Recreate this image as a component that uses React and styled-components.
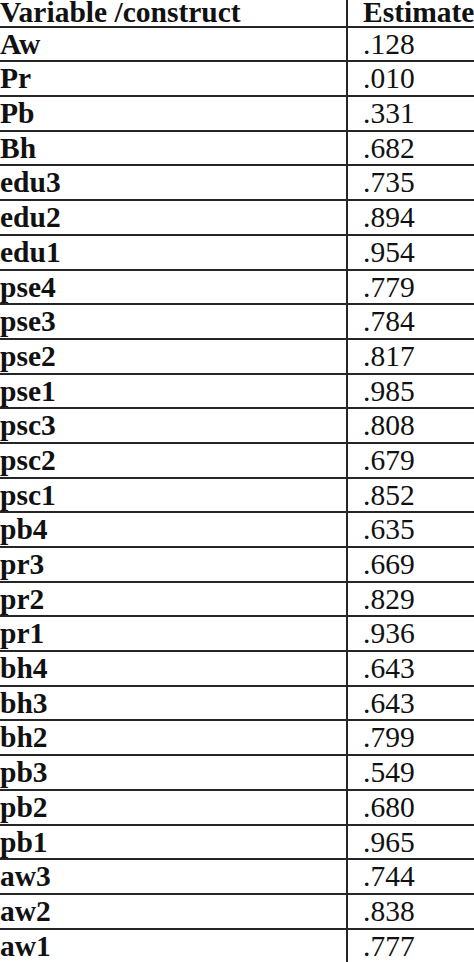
import React from 'react';
import styled, { createGlobalStyle } from 'styled-components';

const GlobalStyle = createGlobalStyle`
  html, body {
    margin: 0;
    padding: 0;
    background: #fff;
    overflow: hidden;
  }
  body {
    font-family: "Liberation Serif", "Times New Roman", serif;
    color: #111;
  }
`;

const rows = [
  ['Aw', '.128'],
  ['Pr', '.010'],
  ['Pb', '.331'],
  ['Bh', '.682'],
  ['edu3', '.735'],
  ['edu2', '.894'],
  ['edu1', '.954'],
  ['pse4', '.779'],
  ['pse3', '.784'],
  ['pse2', '.817'],
  ['pse1', '.985'],
  ['psc3', '.808'],
  ['psc2', '.679'],
  ['psc1', '.852'],
  ['pb4', '.635'],
  ['pr3', '.669'],
  ['pr2', '.829'],
  ['pr1', '.936'],
  ['bh4', '.643'],
  ['bh3', '.643'],
  ['bh2', '.799'],
  ['pb3', '.549'],
  ['pb2', '.680'],
  ['pb1', '.965'],
  ['aw3', '.744'],
  ['aw2', '.838'],
  ['aw1', '.777'],
];

const Table = styled.div`
  width: 474px;
  height: 962px;
  overflow: hidden;
  display: flex;
  flex-direction: column;
`;

const Row = styled.div`
  display: grid;
  grid-template-columns: 348px 1fr;
  flex-shrink: 0;
  box-sizing: border-box;
  height: ${(p) => (p.$head ? '27.7px' : '34.7px')};
  border-bottom: 2px solid #262626;
  font-size: 29.5px;
  line-height: ${(p) => (p.$head ? '24px' : '32.7px')};
  white-space: nowrap;
`;

const Label = styled.div`
  padding-left: 0;
  font-weight: bold;
  border-right: 2px solid #262626;
  overflow: hidden;
`;

const Value = styled.div`
  padding-left: 15px;
  font-weight: ${(p) => (p.$head ? 'bold' : 'normal')};
  overflow: hidden;
`;

export default function App() {
  return (
    <>
      <GlobalStyle />
      <Table>
        <Row $head>
          <Label>Variable /construct</Label>
          <Value $head>Estimate</Value>
        </Row>
        {rows.map(([name, est]) => (
          <Row key={name}>
            <Label>{name}</Label>
            <Value>{est}</Value>
          </Row>
        ))}
      </Table>
    </>
  );
}
